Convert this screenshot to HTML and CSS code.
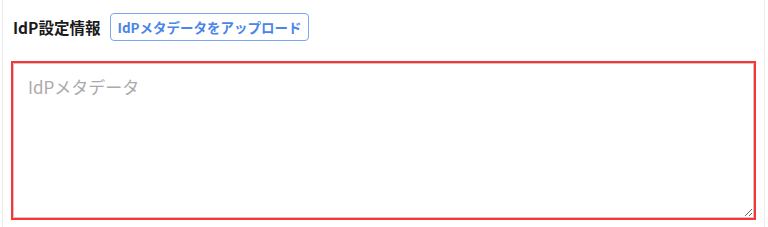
FILE: index.html
```html
<!DOCTYPE html>
<html>
<head>
  <title>IdP設定</title>
  <link rel="stylesheet" href="styles.css">
</head>
<body>
  <div class="panel">
    <div class="field-head">
      <span class="field-label">IdP設定情報</span>
      <button class="upload-button">IdPメタデータをアップロード</button>
    </div>
    <textarea class="metadata error" placeholder="IdPメタデータ"></textarea>
  </div>
</body>
</html>
```

FILE: styles.css
```css
body {
  margin: 0;
  background-color: #fff;
  font-family: "Noto Sans CJK JP", "Noto Sans", sans-serif;
}

.panel {
  margin: 0 3px 0 2px;
  height: 227px;
  border-left: 1px solid #ececec;
  border-right: 1px solid #ececec;
  padding: 13px 8px 0 10px;
  box-sizing: border-box;
}

.field-head {
  display: flex;
  align-items: center;
  gap: 10px;
  height: 28px;
}

.field-label {
  font-size: 15.5px;
  font-weight: bold;
  color: #1a1a1a;
}

.upload-button {
  height: 28px;
  padding: 0 6px;
  font-family: inherit;
  font-size: 13.5px;
  font-weight: bold;
  color: #4a86e8;
  background-color: #fff;
  border: 1px solid #7aa7ef;
  border-radius: 4px;
  cursor: pointer;
}

.metadata {
  display: block;
  width: 741px;
  height: 155px;
  margin-top: 22px;
  padding: 10px 14px;
  box-sizing: border-box;
  font-family: inherit;
  font-size: 17px;
  border: 1px solid #c8c8c8;
  border-radius: 0;
  resize: vertical;
}

.metadata::placeholder {
  color: #aaa;
}

.metadata.error {
  outline: 2px solid #f33;
}
```
